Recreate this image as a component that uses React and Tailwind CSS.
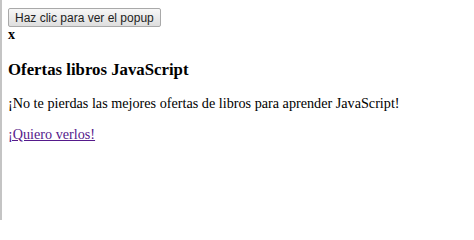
import React from "react";

const serif = { fontFamily: '"Liberation Serif", "Times New Roman", serif' };

export default function App() {
  return (
    <div
      className="min-h-[220px] w-[474px] border-l-2 border-[#c4c4c4] bg-white pl-[6px] pt-[8px] text-black"
      style={serif}
    >
      <button
        className="flex h-[19px] items-center rounded-[2px] border border-[#a9a9a9] bg-gradient-to-b from-[#f7f7f7] to-[#dedede] px-[6px] text-[12px] text-[#222] font-['Liberation_Sans',Arial,sans-serif]"
      >
        Haz clic para ver el popup
      </button>
      <div className="text-[14px] font-bold leading-[16px]">x</div>
      <h3 className="mt-[17px] text-[16.8px] font-bold leading-[20px]">
        Ofertas libros JavaScript
      </h3>
      <p className="mt-[15px] text-[14.2px] leading-[16px]">
        ¡No te pierdas las mejores ofertas de libros para aprender JavaScript!
      </p>
      <p className="mt-[15px] text-[14.2px] leading-[16px]">
        <a href="#" className="text-[#551a8b] underline">
          ¡Quiero verlos!
        </a>
      </p>
    </div>
  );
}
